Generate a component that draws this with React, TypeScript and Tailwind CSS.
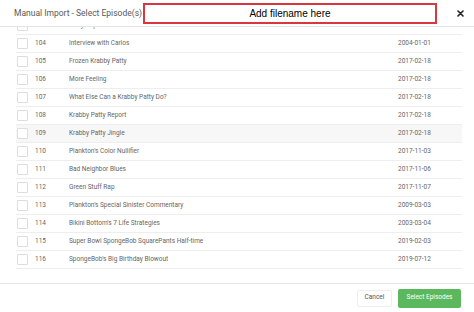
const episodes = [
  { num: 103, title: "Patty Caper", date: "2017-01-01" },
  { num: 104, title: "Interview with Carlos", date: "2004-01-01" },
  { num: 105, title: "Frozen Krabby Patty", date: "2017-02-18" },
  { num: 106, title: "More Feeling", date: "2017-02-18" },
  { num: 107, title: "What Else Can a Krabby Patty Do?", date: "2017-02-18" },
  { num: 108, title: "Krabby Patty Report", date: "2017-02-18" },
  { num: 109, title: "Krabby Patty Jingle", date: "2017-02-18" },
  { num: 110, title: "Plankton's Color Nullifier", date: "2017-11-03" },
  { num: 111, title: "Bad Neighbor Blues", date: "2017-11-06" },
  { num: 112, title: "Green Stuff Rap", date: "2017-11-07" },
  { num: 113, title: "Plankton's Special Sinister Commentary", date: "2009-03-03" },
  { num: 114, title: "Bikini Bottom's 7 Life Strategies", date: "2003-03-04" },
  { num: 115, title: "Super Bowl SpongeBob SquarePants Half-time", date: "2019-02-03" },
  { num: 116, title: "SpongeBob's Big Birthday Blowout", date: "2019-07-12" },
];

const App = () => {
  return (
    <div className="flex h-[312px] w-full flex-col overflow-hidden bg-white font-['Roboto',sans-serif] text-[#666]">
      {/* header */}
      <div className="relative z-10 flex h-[27px] shrink-0 items-center border-b border-[#e5e5e5] bg-white pl-[14px] pr-[6px]">
        <span className="text-[8.5px] text-[#5a5a5a]">Manual Import - Select Episode(s)</span>
        <div className="ml-px flex h-[21px] w-[294px] items-center justify-center border-2 border-[#d9363e] bg-white font-['Liberation_Sans',sans-serif] text-[10px] text-black">
          Add filename here
        </div>
        <button type="button" className="ml-auto flex h-4 w-4 items-center justify-center">
          <svg width="7" height="7" viewBox="0 0 7 7">
            <path d="M1 1L6 6M6 1L1 6" stroke="#222" strokeWidth="1.6" strokeLinecap="round" />
          </svg>
        </button>
      </div>

      {/* episode list */}
      <div className="min-h-0 flex-1 overflow-hidden px-[16px]">
        <div className="-mt-[10px] w-[446px]">
          {episodes.map((ep) => (
            <div
              key={ep.num}
              className={`flex h-[18px] items-center border-b border-[#eeeeee] text-[6.5px] ${
                ep.num === 109 ? "bg-[#f7f7f7]" : ""
              }`}
            >
              <span className="ml-px h-[11px] w-[11px] shrink-0 rounded-[1px] border border-[#dddddd] bg-white" />
              <span className="ml-[7px] w-[34px] shrink-0">{ep.num}</span>
              <span className="flex-1 truncate">{ep.title}</span>
              <span className="w-[64px] shrink-0">{ep.date}</span>
            </div>
          ))}
        </div>
      </div>

      {/* footer */}
      <div className="flex h-[29px] shrink-0 items-center justify-end gap-[6px] border-t border-[#e5e5e5] pr-[13px]">
        <button
          type="button"
          className="flex h-[17px] w-[35px] items-center justify-center rounded-[2px] border border-[#eeeeee] bg-white text-[6.5px] text-[#555]"
        >
          Cancel
        </button>
        <button
          type="button"
          className="flex h-[19px] w-[63px] items-center justify-center rounded-[2px] bg-[#5cb85c] text-[6.5px] text-white"
        >
          Select Episodes
        </button>
      </div>
    </div>
  );
};

export default App;
